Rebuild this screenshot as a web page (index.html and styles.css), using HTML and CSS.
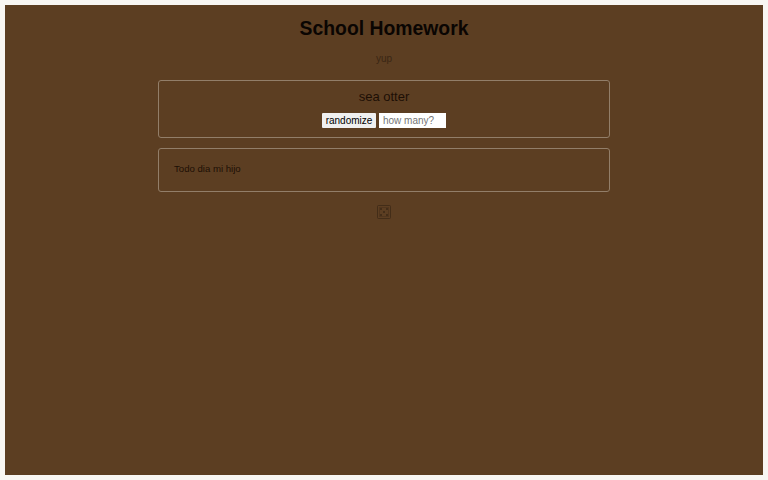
FILE: index.html
```html
<!DOCTYPE html>
<html lang="en">
<head>
<meta charset="utf-8">
<title>School Homework</title>
<link rel="stylesheet" href="styles.css">
</head>
<body>
<main class="page">
  <h1 class="title">School Homework</h1>
  <p class="subtitle">yup</p>
  <section class="card card-top">
    <h2 class="word">sea otter</h2>
    <div class="controls">
      <button class="btn" type="button">randomize</button>
      <input class="count" type="text" placeholder="how many?">
    </div>
  </section>
  <section class="card card-note">
    <p class="note">Todo dia mi hijo</p>
  </section>
  <svg class="die" width="14" height="14" viewBox="0 0 14 14" aria-hidden="true">
    <rect x="0.5" y="0.5" width="13" height="13" rx="1" fill="none" stroke="#432d18"/>
    <rect x="2.5" y="2.5" width="9" height="9" fill="none" stroke="#50351d"/>
    <rect x="3" y="3" width="2" height="2" fill="#432d18"/>
    <rect x="9" y="3" width="2" height="2" fill="#432d18"/>
    <rect x="6" y="6" width="2" height="2" fill="#432d18"/>
    <rect x="3" y="9" width="2" height="2" fill="#432d18"/>
    <rect x="9" y="9" width="2" height="2" fill="#432d18"/>
  </svg>
</main>
</body>
</html>
```
FILE: styles.css
```css
html, body { height: 100%; }
body {
  margin: 0;
  padding: 5px;
  box-sizing: border-box;
  background: #f8f6f3;
  font-family: "Liberation Sans", Arial, sans-serif;
}
.page {
  height: 470px;
  background: #5c3e22;
  display: flex;
  flex-direction: column;
  align-items: center;
  padding-top: 12px;
  box-sizing: border-box;
}
.title {
  margin: 0;
  font-size: 19.36px;
  line-height: 23px;
  font-weight: bold;
  color: #0a0502;
}
.subtitle {
  margin: 13px 0 0;
  font-size: 10px;
  line-height: 12px;
  color: #3a2614;
}
.card {
  width: 452px;
  box-sizing: border-box;
  border: 1px solid #927e69;
  border-radius: 3px;
}
.card-top {
  margin-top: 15px;
  height: 58px;
  padding-top: 8px;
  display: flex;
  flex-direction: column;
  align-items: center;
}
.word {
  margin: 0;
  font-size: 13px;
  line-height: 15px;
  font-weight: normal;
  color: #1c0f05;
}
.controls {
  display: flex;
  gap: 3px;
  margin-top: 9px;
}
.btn {
  width: 54px;
  height: 15px;
  padding: 0;
  border: 0;
  border-radius: 1px;
  background: #f0f0f0;
  color: #000;
  font: 10px "Liberation Sans", Arial, sans-serif;
}
.count {
  width: 67px;
  height: 15px;
  padding: 0 4px;
  box-sizing: border-box;
  border: 0;
  background: #fff;
  font: 10px "Liberation Sans", Arial, sans-serif;
}
.count::placeholder { color: #757575; opacity: 1; }
.card-note {
  margin-top: 10px;
  height: 44px;
  padding: 13px 15px;
}
.note {
  margin: 0;
  font-size: 9.6px;
  line-height: 14px;
  color: #1c0f05;
}
.die { margin-top: 13px; }
```
